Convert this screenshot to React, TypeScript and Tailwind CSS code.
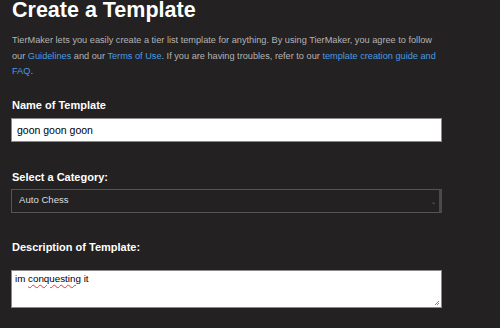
export default function App() {
  return (
    <div className="min-h-[328px] w-[500px] bg-[#232122] px-[12px] pt-0 font-['Liberation_Sans',Arial,sans-serif] overflow-hidden">
      <h1 className="text-[21.5px] font-bold leading-[20px] text-white">Create a Template</h1>
      <p className="mt-[13px] text-[9.2px] leading-[15.5px] text-[#b4b4b4] w-[430px]">
        TierMaker lets you easily create a tier list template for anything. By using TierMaker, you agree to follow
        our <a className="text-[#4b9be0]">Guidelines</a> and our <a className="text-[#4b9be0]">Terms of Use</a>. If you are having troubles, refer to our{" "}
        <a className="text-[#4b9be0]">template creation guide and FAQ</a>.
      </p>
      <div className="mt-[17px] text-[11px] font-bold text-white leading-[16px]">Name of Template</div>
      <input
        defaultValue="goon goon goon"
        className="mt-[5px] block h-[24px] w-[431px] -ml-[1px] border border-[#8a8a8a] bg-white px-[5px] text-[10.5px] text-black outline-none"
      />
      <div className="mt-[27px] text-[11px] font-bold text-white leading-[16px]">Select a Category:</div>
      <div className="relative mt-[4px] -ml-[1px] flex h-[24px] w-[431px] items-center border border-[#555] border-r-[3px] border-r-[#4a4a4a] bg-[#232122] pl-[7px] text-[9.6px] text-[#dddddd]">
        Auto Chess
        <span className="absolute right-[3px] top-[9px] text-[6px] leading-none text-[#777]">⌄</span>
      </div>
      <div className="mt-[26px] text-[11px] font-bold text-white leading-[16px]">Description of Template:</div>
      <div className="relative mt-[15px] -ml-[1px] h-[38px] w-[431px] border border-[#8a8a8a] bg-white px-[3px] pt-[1px] text-[9.8px] text-black leading-[14px]">
        im <span className="underline decoration-wavy decoration-[#e33] decoration-[1px] underline-offset-2">conquesting</span> it
        <svg className="absolute bottom-[1px] right-[1px]" width="6" height="6" viewBox="0 0 6 6">
          <path d="M5 1 L1 5 M5 3 L3 5" stroke="#888" strokeWidth="1" />
        </svg>
      </div>
    </div>
  );
}
